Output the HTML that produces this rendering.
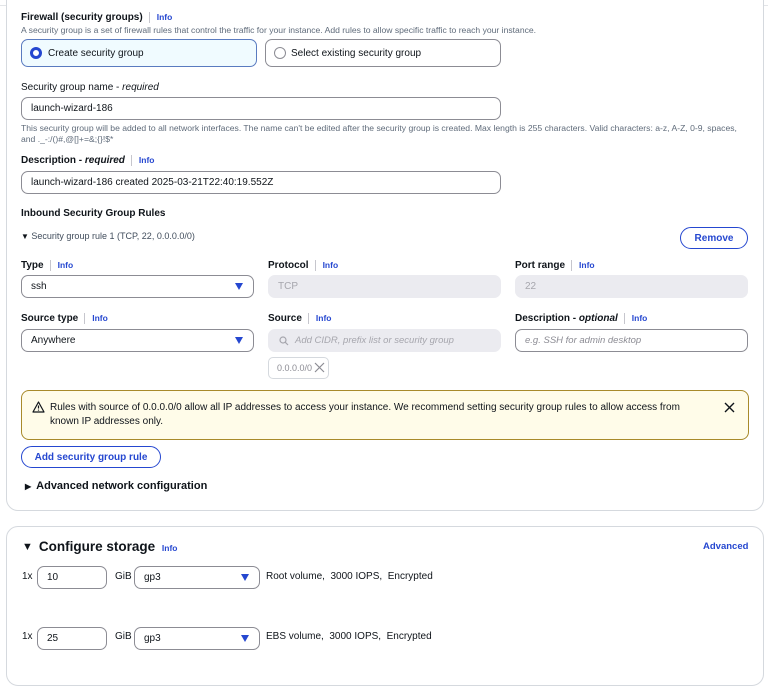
<!DOCTYPE html>
<html><head><meta charset="utf-8"><style>
*{box-sizing:border-box;margin:0;padding:0}
body{width:768px;height:657px;background:#fff;font-family:"Liberation Sans",sans-serif;color:#0f141a;position:relative;overflow:hidden;font-size:10px}
.a{position:absolute;white-space:nowrap}
.panel{position:absolute;border:1px solid #d5d9de;border-radius:12px;background:#fff}
.b{font-weight:bold}
.info{color:#2547d0;font-weight:bold;font-size:8.5px}
.sep{display:inline-block;width:1px;height:11px;background:#c6c6cd;vertical-align:middle;margin:0 7px 0 6px}
.inp{position:absolute;border:1px solid #8c8c94;border-radius:7px;height:23px;padding-left:9px;display:flex;align-items:center;font-size:10px;background:#fff;white-space:nowrap}
.dis{background:#ebebf0;border-color:#ebebf0;color:#a6a6ad}
.arr{position:absolute;right:10px;top:7px;width:0;height:0;border-left:4px solid transparent;border-right:4px solid transparent;border-top:7px solid #2547d0}
.small{font-size:8.6px;color:#5f6b7a}
.btn{position:absolute;border:1px solid #2547d0;border-radius:12px;color:#2547d0;font-weight:bold;display:flex;align-items:center;justify-content:center;font-size:10px}
.lbl{font-weight:bold;font-size:10px}
.box{position:absolute;display:flex;align-items:center}
</style></head><body>
<div class="a" style="left:0;top:5px;width:768px;height:1px;background:#e3e5e8"></div>
<div class="panel" style="left:6px;top:-20px;width:758px;height:531px"></div>

<div class="a lbl" style="left:21px;top:12px">Firewall (security groups)<span class="sep"></span><span class="info">Info</span></div>
<div class="a small" style="left:21px;top:25px">A security group is a set of firewall rules that control the traffic for your instance. Add rules to allow specific traffic to reach your instance.</div>

<div class="a" style="left:21px;top:39px;width:236px;height:28px;border:1px solid #5a7bc0;border-radius:7px;background:#f0fbff"></div>
<div class="a" style="left:30px;top:47px;width:12px;height:12px;border-radius:50%;border:3.5px solid #2547d0;background:#fff"></div>
<div class="a" style="left:48px;top:48px">Create security group</div>
<div class="a" style="left:265px;top:39px;width:236px;height:28px;border:1px solid #8c8c94;border-radius:7px"></div>
<div class="a" style="left:274px;top:47px;width:12px;height:12px;border-radius:50%;border:1px solid #8c8c94"></div>
<div class="a" style="left:291px;top:48px">Select existing security group</div>

<div class="a" style="left:21px;top:82px">Security group name - <i>required</i></div>
<div class="inp" style="left:21px;top:97px;width:480px">launch-wizard-186</div>
<div class="a small" style="left:21px;top:123px">This security group will be added to all network interfaces. The name can't be edited after the security group is created. Max length is 255 characters. Valid characters: a-z, A-Z, 0-9, spaces,</div>
<div class="a small" style="left:21px;top:134px">and ._-:/()#,@[]+=&amp;;{}!$*</div>

<div class="a lbl" style="left:21px;top:155px">Description - <i>required</i><span class="sep"></span><span class="info">Info</span></div>
<div class="inp" style="left:21px;top:171px;width:480px">launch-wizard-186 created 2025-03-21T22:40:19.552Z</div>

<div class="a lbl" style="left:21px;top:208px">Inbound Security Group Rules</div>
<div class="a" style="left:21px;top:231px;font-size:9px;color:#414d5c"><span style="color:#0f141a;font-size:8px">▼</span> Security group rule 1 (TCP, 22, 0.0.0.0/0)</div>
<div class="btn" style="left:680px;top:227px;width:68px;height:22px">Remove</div>

<div class="a lbl" style="left:21px;top:260px">Type<span class="sep"></span><span class="info">Info</span></div>
<div class="a lbl" style="left:268px;top:260px">Protocol<span class="sep"></span><span class="info">Info</span></div>
<div class="a lbl" style="left:515px;top:260px">Port range<span class="sep"></span><span class="info">Info</span></div>
<div class="inp" style="left:21px;top:275px;width:233px">ssh<div class="arr"></div></div>
<div class="inp dis" style="left:268px;top:275px;width:233px">TCP</div>
<div class="inp dis" style="left:515px;top:275px;width:233px">22</div>

<div class="a lbl" style="left:21px;top:313px">Source type<span class="sep"></span><span class="info">Info</span></div>
<div class="a lbl" style="left:268px;top:313px">Source<span class="sep"></span><span class="info">Info</span></div>
<div class="a lbl" style="left:515px;top:313px">Description - <i>optional</i><span class="sep"></span><span class="info">Info</span></div>
<div class="inp" style="left:21px;top:329px;width:233px">Anywhere<div class="arr"></div></div>
<div class="inp dis" style="left:268px;top:329px;width:233px;padding-left:26px;font-style:italic;font-size:9.5px">Add CIDR, prefix list or security group
<svg style="position:absolute;left:10px;top:6px" width="10" height="10" viewBox="0 0 10 10"><circle cx="4" cy="4" r="3" fill="none" stroke="#a6a6ad" stroke-width="1.2"/><path d="M6.2 6.2L9 9" stroke="#a6a6ad" stroke-width="1.2"/></svg></div>
<div class="inp" style="left:515px;top:329px;width:233px;color:#8c8c94;font-style:italic;font-size:9.5px">e.g. SSH for admin desktop</div>
<div class="box" style="left:268px;top:357px;width:61px;height:22px;border:1px solid #d5d9de;border-radius:5px;color:#8c8c94;font-size:9px;padding-left:8px">0.0.0.0/0</div>
<svg class="a" style="left:314px;top:362px" width="11" height="11" viewBox="0 0 11 11"><path d="M1 1L10 10M10 1L1 10" stroke="#8c8c94" stroke-width="1.2"/></svg>

<div class="a" style="left:21px;top:390px;width:728px;height:50px;border:1px solid #a88a2a;border-radius:8px;background:#fffce9"></div>
<svg class="a" style="left:32px;top:401px" width="13" height="12" viewBox="0 0 13 12"><path d="M6.5 1L12 11H1Z" fill="none" stroke="#0f141a" stroke-width="1.2" stroke-linejoin="round"/><path d="M6.5 4.5V7.5M6.5 8.6V9.6" stroke="#0f141a" stroke-width="1.2"/></svg>
<div class="a" style="left:50px;top:402px">Rules with source of 0.0.0.0/0 allow all IP addresses to access your instance. We recommend setting security group rules to allow access from</div>
<div class="a" style="left:50px;top:416px">known IP addresses only.</div>
<svg class="a" style="left:724px;top:402px" width="11" height="11" viewBox="0 0 11 11"><path d="M1 1L10 10M10 1L1 10" stroke="#0f141a" stroke-width="1.4"/></svg>

<div class="btn" style="left:21px;top:446px;width:140px;height:22px">Add security group rule</div>
<div class="a b" style="left:25px;top:480px;font-size:11px"><span style="font-size:8px;margin-right:5px">▶</span>Advanced network configuration</div>

<div class="panel" style="left:6px;top:526px;width:758px;height:160px"></div>
<div class="a b" style="left:22px;top:539px;font-size:13.5px"><span style="font-size:11px;margin-right:6px;vertical-align:1px">▼</span>Configure storage <span class="info" style="margin-left:3px">Info</span></div>
<div class="a info" style="left:703px;top:541px;font-size:9.5px">Advanced</div>

<div class="a" style="left:22px;top:571px">1x</div>
<div class="inp" style="left:37px;top:566px;width:70px;height:23px">10</div>
<div class="a" style="left:115px;top:571px">GiB</div>
<div class="inp" style="left:134px;top:566px;width:126px">gp3<div class="arr"></div></div>
<div class="a" style="left:266px;top:571px">Root volume,&nbsp; 3000 IOPS,&nbsp; Encrypted</div>

<div class="a" style="left:22px;top:631px">1x</div>
<div class="inp" style="left:37px;top:627px;width:70px;height:23px">25</div>
<div class="a" style="left:115px;top:631px">GiB</div>
<div class="inp" style="left:134px;top:627px;width:126px">gp3<div class="arr"></div></div>
<div class="a" style="left:266px;top:631px">EBS volume,&nbsp; 3000 IOPS,&nbsp; Encrypted</div>
</body></html>
